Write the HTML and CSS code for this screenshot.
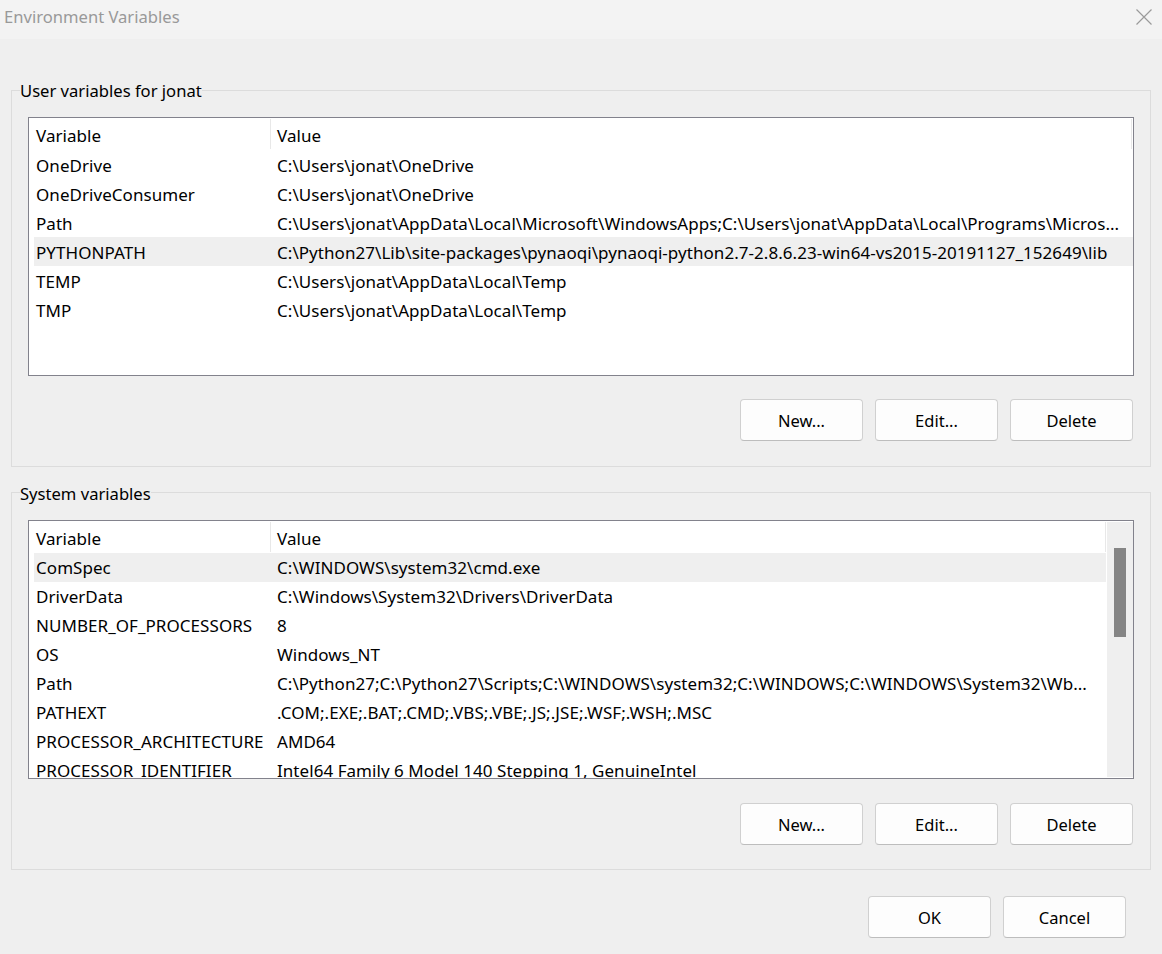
FILE: index.html
```html
<!DOCTYPE html>
<html lang="en">
<head>
<meta charset="utf-8">
<title>Environment Variables</title>
<link rel="stylesheet" href="styles.css">
</head>
<body>
<div class="dialog">
  <header class="titlebar">
    <span class="title">Environment Variables</span>
    <svg class="close" width="16" height="16" viewBox="0 0 16 16" aria-hidden="true"><path d="M0.5 0.5 L15.5 15.5 M15.5 0.5 L0.5 15.5" stroke="#9a9a9a" stroke-width="1.2" fill="none"/></svg>
  </header>
  <main class="content">
    <fieldset class="group group-user">
      <legend class="legend">User variables for jonat</legend>
      <div class="list">
        <div class="rows">
          <div class="row head"><span class="name">Variable</span><span class="value">Value</span></div>
          <div class="row"><span class="name">OneDrive</span><span class="value">C:\Users\jonat\OneDrive</span></div>
          <div class="row"><span class="name">OneDriveConsumer</span><span class="value">C:\Users\jonat\OneDrive</span></div>
          <div class="row"><span class="name">Path</span><span class="value">C:\Users\jonat\AppData\Local\Microsoft\WindowsApps;C:\Users\jonat\AppData\Local\Programs\Micros...</span></div>
          <div class="row selected"><span class="name">PYTHONPATH</span><span class="value">C:\Python27\Lib\site-packages\pynaoqi\pynaoqi-python2.7-2.8.6.23-win64-vs2015-20191127_152649\lib</span></div>
          <div class="row"><span class="name">TEMP</span><span class="value">C:\Users\jonat\AppData\Local\Temp</span></div>
          <div class="row"><span class="name">TMP</span><span class="value">C:\Users\jonat\AppData\Local\Temp</span></div>
        </div>
      </div>
      <div class="actions">
        <button class="btn">New...</button>
        <button class="btn">Edit...</button>
        <button class="btn">Delete</button>
      </div>
    </fieldset>
    <fieldset class="group group-system">
      <legend class="legend">System variables</legend>
      <div class="list">
        <div class="rows">
          <div class="row head"><span class="name">Variable</span><span class="value">Value</span></div>
          <div class="row selected"><span class="name">ComSpec</span><span class="value">C:\WINDOWS\system32\cmd.exe</span></div>
          <div class="row"><span class="name">DriverData</span><span class="value">C:\Windows\System32\Drivers\DriverData</span></div>
          <div class="row"><span class="name">NUMBER_OF_PROCESSORS</span><span class="value">8</span></div>
          <div class="row"><span class="name">OS</span><span class="value">Windows_NT</span></div>
          <div class="row"><span class="name">Path</span><span class="value">C:\Python27;C:\Python27\Scripts;C:\WINDOWS\system32;C:\WINDOWS;C:\WINDOWS\System32\Wb...</span></div>
          <div class="row"><span class="name">PATHEXT</span><span class="value">.COM;.EXE;.BAT;.CMD;.VBS;.VBE;.JS;.JSE;.WSF;.WSH;.MSC</span></div>
          <div class="row"><span class="name">PROCESSOR_ARCHITECTURE</span><span class="value">AMD64</span></div>
          <div class="row"><span class="name">PROCESSOR_IDENTIFIER</span><span class="value">Intel64 Family 6 Model 140 Stepping 1, GenuineIntel</span></div>
        </div>
        <div class="scrollbar"><div class="thumb"></div></div>
      </div>
      <div class="actions">
        <button class="btn">New...</button>
        <button class="btn">Edit...</button>
        <button class="btn">Delete</button>
      </div>
    </fieldset>
    <div class="footer">
      <button class="btn">OK</button>
      <button class="btn">Cancel</button>
    </div>
  </main>
</div>
</body>
</html>
```
FILE: styles.css
```css
* { box-sizing: border-box; }
html, body { margin: 0; padding: 0; }
body {
  width: 1162px;
  height: 954px;
  overflow: hidden;
  background: #efefef;
  color: #000;
  font-family: "Noto Sans", "Liberation Sans", sans-serif;
  font-size: 16.6px;
}
.dialog { display: flex; flex-direction: column; height: 954px; }
.titlebar {
  height: 39px;
  flex: none;
  background: #f3f3f3;
  display: flex;
  align-items: center;
  justify-content: space-between;
  padding: 0 10px 6px 4px;
}
.title { color: #999; }
.close { display: block; }
.content { padding: 0 11px; display: flex; flex-direction: column; }
.group {
  margin: 0;
  min-width: 0;
  border: 1px solid #dcdcdc;
  padding: 0 16px;
}
.group-user { margin-top: 39px; height: 389px; }
.group-system { margin-top: 13px; height: 390px; }
.legend {
  padding: 0;
  margin-left: -8px;
  height: 24px;
  line-height: 26px;
}
.list {
  height: 259px;
  margin-top: 15px;
  border: 1px solid #82828c;
  background: #fff;
  display: flex;
  overflow: hidden;
}
.rows { flex: 1; min-width: 0; padding: 1px 0 0 5px; }
.row {
  display: flex;
  height: 29px;
  line-height: 31px;
  white-space: nowrap;
  font-size: 17px;
  letter-spacing: 0.05px;
}
.row.head { height: 31px; line-height: 33px; }
.row.selected { background: #efefef; }
.group-system .legend { line-height: 28px; }
.group-system .list { margin-top: 16px; }
.group-system .row { line-height: 29px; }
.group-system .row.head { line-height: 33px; }
.name { width: 236px; flex: none; padding-left: 2px; }
.value { padding-left: 7px; }
.head .value {
  border-left: 1px solid #e8e8e8;
  border-right: 1px solid #e8e8e8;
  padding-left: 6px;
  height: 30px;
  flex: 1;
}
.group-user .head .value { margin-right: 1px; }
.scrollbar {
  width: 26px;
  flex: none;
  margin: 1px 0 1px 1px;
  background: #efefef;
  padding: 26px 7px 0 7px;
}
.thumb { height: 89px; background: #858585; }
.actions {
  display: flex;
  justify-content: flex-end;
  gap: 12px;
  margin-top: 23px;
  padding-right: 1px;
}
.group-system .actions { margin-top: 24px; }
.btn {
  width: 123px;
  height: 42px;
  padding: 0;
  font: inherit;
  font-size: 16.5px;
  color: #000;
  background: #fdfdfd;
  border: 1px solid #d0d0d0;
  border-bottom-color: #bdbdbd;
  border-radius: 4px;
}
.footer {
  display: flex;
  justify-content: flex-end;
  gap: 12px;
  margin-top: 26px;
  padding-right: 25px;
}
```
